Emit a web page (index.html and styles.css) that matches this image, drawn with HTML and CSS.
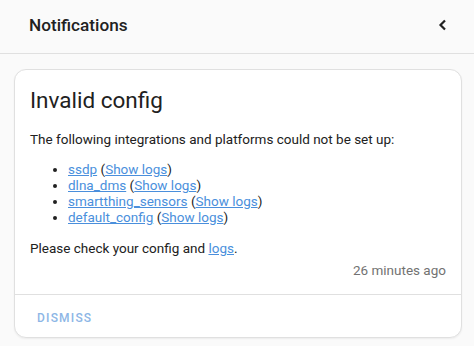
FILE: index.html
```html
<!DOCTYPE html>
<html lang="en">
  <head>
    <meta charset="UTF-8" />
    <meta name="viewport" content="width=device-width, initial-scale=1.0" />
    <title>Notifications</title>
    <link rel="stylesheet" href="styles.css">
  </head>
  <body>
    <div class="header">
      <h1>Notifications</h1>
      <button class="close" aria-label="Close">
        <svg width="14" height="14" viewBox="0 0 14 14">
          <path d="M9 2.5 L4.5 7 L9 11.5" fill="none" stroke="#212121" stroke-width="2.2" />
        </svg>
      </button>
    </div>
    <div class="content">
      <div class="card">
        <div class="card-body">
          <h2>Invalid config</h2>
          <p>The following integrations and platforms could not be set up:</p>
          <ul>
            <li><a href="#">ssdp</a> (<a href="#">Show logs</a>)</li>
            <li><a href="#">dlna_dms</a> (<a href="#">Show logs</a>)</li>
            <li><a href="#">smartthing_sensors</a> (<a href="#">Show logs</a>)</li>
            <li><a href="#">default_config</a> (<a href="#">Show logs</a>)</li>
          </ul>
          <p class="check">Please check your config and <a href="#">logs</a>.</p>
          <div class="time">26 minutes ago</div>
        </div>
        <div class="card-actions">
          <button class="dismiss">Dismiss</button>
        </div>
      </div>
    </div>
  </body>
</html>
```

FILE: styles.css
```css
* {
  margin: 0;
  padding: 0;
  box-sizing: border-box;
}

body {
  font-family: Roboto, "Liberation Sans", sans-serif;
  background-color: #fafafa;
  color: #212121;
}

.header {
  height: 54px;
  display: flex;
  align-items: center;
  justify-content: space-between;
  padding: 0 24px 4px 29px;
  border-bottom: 1px solid #e0e0e0;
}

.header h1 {
  font-size: 17.2px;
  font-weight: 500;
  color: #212121;
}

.close {
  background: none;
  border: none;
  display: flex;
}

.content {
  padding: 15px 12px 8px 14px;
}

.card {
  background-color: white;
  border: 1px solid #e0e0e0;
  border-radius: 12px;
  box-shadow: 0 1px 2px rgba(0, 0, 0, 0.06);
}

.card-body {
  padding: 15px 15px 16px 15px;
  font-size: 13.5px;
  line-height: 16px;
}

.card-body h2 {
  font-size: 22.5px;
  font-weight: 400;
  line-height: 30px;
  margin-bottom: 16px;
}

.card-body p {
  margin-bottom: 14px;
}

.card-body .check {
  margin-bottom: 6px;
}

.card-body ul {
  padding-left: 38px;
  margin-bottom: 15px;
}

.card-body a {
  color: #4a8fdc;
}

.time {
  text-align: right;
  color: #727272;
}

.card-actions {
  border-top: 1px solid #e0e0e0;
  height: 43px;
  display: flex;
  align-items: center;
  padding: 3px 8px 0 8px;
}

.dismiss {
  background: none;
  border: none;
  font-family: Roboto, "Liberation Sans", sans-serif;
  font-size: 12px;
  font-weight: 500;
  letter-spacing: 1.2px;
  text-transform: uppercase;
  color: #8db6e6;
  padding: 3px 14px;
}
```
